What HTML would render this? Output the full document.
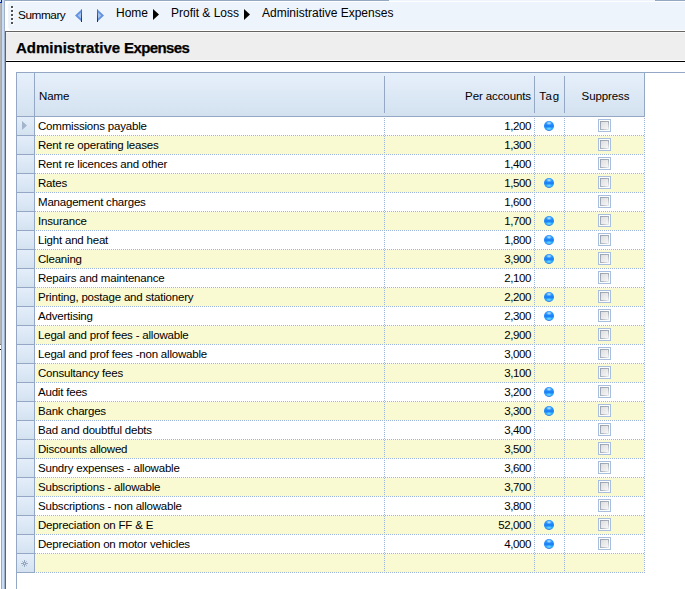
<!DOCTYPE html>
<html><head><meta charset="utf-8"><style>
html,body{margin:0;padding:0;width:685px;height:589px;overflow:hidden;background:#fff;}
body{position:relative;font-family:"Liberation Sans",sans-serif;color:#000;}
.a{position:absolute;}
.t{position:absolute;font-size:11.5px;letter-spacing:-0.1px;line-height:13px;white-space:nowrap;}
.bc{position:absolute;font-size:12px;line-height:14px;white-space:nowrap;color:#000;}
.hd{position:absolute;font-size:11.5px;letter-spacing:-0.1px;line-height:13px;white-space:nowrap;}
.rh{position:absolute;left:17px;width:17px;background:linear-gradient(#e4eefa,#d4e2f0);}
.dh{position:absolute;height:1px;background:repeating-linear-gradient(to right,#9cb4dc 0 1px,transparent 1px 2px);}
.dv{position:absolute;width:1px;background:repeating-linear-gradient(to bottom,#9cb4dc 0 1px,transparent 1px 2px);}
.tag{position:absolute;width:10px;height:10px;border-radius:50%;background:radial-gradient(ellipse 3px 2px at 50% 22%,#c8e6ff 0,rgba(150,210,255,0) 100%),radial-gradient(ellipse 3px 2px at 50% 78%,#70dcff 0,rgba(100,210,255,0) 100%),linear-gradient(#2a98ff 0,#2090ff 35%,#1a7cf4 52%,#30b0ff 78%,#1e5cd8 100%);}
.cb{position:absolute;width:11px;height:11px;border:1px solid #a8bedf;background:#fdfdfd;}
.cb i{position:absolute;left:1px;top:1px;width:9px;height:9px;background:linear-gradient(135deg,#9aa2b2 0%,#a8b0bc 55%,#f2f2f2 100%);}
.cb b{position:absolute;left:2px;top:2px;width:7px;height:7px;background:linear-gradient(135deg,#dedede,#f6f6f6);}
</style></head><body>

<div class="a" style="left:0;top:0;width:1px;height:344px;background:#b4b4b4"></div>
<div class="a" style="left:0;top:344px;width:1px;height:1px;background:#707070"></div>
<div class="a" style="left:0;top:349px;width:1px;height:1px;background:#000"></div>
<div class="a" style="left:1px;top:0;width:1px;height:589px;background:#98aac8"></div>
<div class="a" style="left:2px;top:0;width:2px;height:589px;background:#c8dcf8"></div>
<div class="a" style="left:4px;top:0;width:1px;height:589px;background:#a0b0c8"></div>
<div class="a" style="left:0;top:0;width:1px;height:2px;background:#c8dcf8"></div>
<div class="a" style="left:1px;top:0;width:1px;height:3px;background:#0a28a0"></div>
<div class="a" style="left:0;top:2px;width:2px;height:1px;background:#0a28a0"></div>
<div class="a" style="left:5px;top:0;width:384px;height:1px;background:#94a8c4"></div>
<div class="a" style="left:389px;top:0;width:266px;height:1px;background:#eef4fc"></div>
<div class="a" style="left:655px;top:0;width:30px;height:1px;background:#94a8c4"></div>
<div class="a" style="left:8px;top:2px;width:677px;height:28px;background:#eef4fc;border-radius:4px 0 0 4px"></div>
<div class="a" style="left:12px;top:7px;width:2px;height:2px;background:#fff"></div>
<div class="a" style="left:11px;top:6px;width:2px;height:2px;background:#505050"></div>
<div class="a" style="left:12px;top:11px;width:2px;height:2px;background:#fff"></div>
<div class="a" style="left:11px;top:10px;width:2px;height:2px;background:#505050"></div>
<div class="a" style="left:12px;top:15px;width:2px;height:2px;background:#fff"></div>
<div class="a" style="left:11px;top:14px;width:2px;height:2px;background:#505050"></div>
<div class="a" style="left:12px;top:19px;width:2px;height:2px;background:#fff"></div>
<div class="a" style="left:11px;top:18px;width:2px;height:2px;background:#505050"></div>
<div class="a" style="left:12px;top:23px;width:2px;height:2px;background:#fff"></div>
<div class="a" style="left:11px;top:22px;width:2px;height:2px;background:#505050"></div>
<div class="t" style="left:18px;top:9px;letter-spacing:-0.45px;font-size:11.8px">Summary</div>
<svg class="a" style="left:74px;top:8px" width="32" height="15" viewBox="0 0 32 15">
<defs><linearGradient id="dk" x1="0" y1="0" x2="0" y2="1"><stop offset="0" stop-color="#4a7ad8"/><stop offset="1" stop-color="#0a24a4"/></linearGradient></defs>
<polygon points="1,7.5 8,1 8,14" fill="#6292e0"/>
<polygon points="3.6,7.5 7,4.4 7,10.6" fill="#a4c2f0"/>
<rect x="7" y="1.5" width="1" height="12.5" fill="url(#dk)"/>
<polygon points="23,1 30,7.5 23,14" fill="#6292e0"/>
<polygon points="24,4.4 27.4,7.5 24,10.6" fill="#a4c2f0"/>
<rect x="23" y="1.5" width="1" height="12.5" fill="url(#dk)"/>
</svg>
<div class="bc" style="left:116px;top:6px">Home</div>
<svg class="a" style="left:153px;top:9px" width="7" height="12"><polygon points="0,0 6,5.5 0,11" fill="#000"/></svg>
<div class="bc" style="left:171px;top:6px">Profit &amp; Loss</div>
<svg class="a" style="left:244px;top:9px" width="7" height="12"><polygon points="0,0 6,5.5 0,11" fill="#000"/></svg>
<div class="bc" style="left:262px;top:6px">Administrative Expenses</div>
<div class="a" style="left:5px;top:31px;width:680px;height:1px;background:#646464"></div>
<div class="a" style="left:6px;top:32px;width:679px;height:1px;background:#f8f8f8"></div>
<div class="a" style="left:6px;top:33px;width:679px;height:27px;background:#eeeeee"></div>
<div class="a" style="left:6px;top:60px;width:679px;height:1px;background:#fff"></div>
<div class="a" style="left:6px;top:61px;width:679px;height:1px;background:#000"></div>
<div class="a" style="left:5px;top:31px;width:1px;height:558px;background:#646464"></div>
<div class="a" style="left:16px;top:39px;font-size:15px;line-height:18px;font-weight:bold;letter-spacing:0px;white-space:nowrap;-webkit-text-stroke:0.25px #000">Administrative</div>
<div class="a" style="left:124px;top:39px;font-size:15px;line-height:18px;font-weight:bold;letter-spacing:-0.6px;white-space:nowrap;-webkit-text-stroke:0.25px #000">Expenses</div>
<div class="a" style="left:16px;top:72px;width:669px;height:1px;background:#94a8c6"></div>
<div class="a" style="left:16px;top:72px;width:1px;height:517px;background:#94a8c6"></div>
<div class="a" style="left:17px;top:73px;width:627px;height:43px;background:linear-gradient(#e6f0fb,#d3e1ef)"></div>
<div class="a" style="left:16px;top:116px;width:629px;height:1px;background:#94a8c6"></div>
<div class="a" style="left:644px;top:72px;width:1px;height:45px;background:#94a8c6"></div>
<div class="a" style="left:34px;top:72px;width:1px;height:501px;background:#94a8c6"></div>
<div class="a" style="left:384px;top:76px;width:1px;height:37px;background:#94a8c6"></div>
<div class="a" style="left:534px;top:76px;width:1px;height:37px;background:#94a8c6"></div>
<div class="a" style="left:564px;top:76px;width:1px;height:37px;background:#94a8c6"></div>
<div class="hd" style="left:39px;top:90px">Name</div>
<div class="hd" style="left:385px;width:146px;text-align:right;top:90px">Per accounts</div>
<div class="hd" style="left:535px;width:29px;text-align:center;top:90px;letter-spacing:0.7px">Tag</div>
<div class="hd" style="left:566px;width:79px;text-align:center;top:90px">Suppress</div>
<div class="a" style="left:35px;top:117px;width:609px;height:18px;background:#ffffff"></div>
<div class="rh" style="top:117px;height:18px"></div>
<div class="a" style="left:17px;top:135px;width:17px;height:1px;background:#94a8c6"></div>
<div class="dh" style="left:35px;top:135px;width:610px"></div>
<div class="t" style="left:38px;top:120px;letter-spacing:-0.2px">Commissions payable</div>
<div class="t" style="left:385px;width:146px;text-align:right;top:120px;letter-spacing:-0.4px">1,200</div>
<div class="tag" style="left:544px;top:121px"></div>
<div class="cb" style="left:598px;top:119px"><i></i><b></b></div>
<div class="a" style="left:35px;top:136px;width:609px;height:18px;background:#fafad2"></div>
<div class="rh" style="top:136px;height:18px"></div>
<div class="a" style="left:17px;top:154px;width:17px;height:1px;background:#94a8c6"></div>
<div class="dh" style="left:36px;top:154px;width:609px"></div>
<div class="t" style="left:38px;top:139px;letter-spacing:-0.2px">Rent re operating leases</div>
<div class="t" style="left:385px;width:146px;text-align:right;top:139px;letter-spacing:-0.4px">1,300</div>
<div class="cb" style="left:598px;top:138px"><i></i><b></b></div>
<div class="a" style="left:35px;top:155px;width:609px;height:18px;background:#ffffff"></div>
<div class="rh" style="top:155px;height:18px"></div>
<div class="a" style="left:17px;top:173px;width:17px;height:1px;background:#94a8c6"></div>
<div class="dh" style="left:35px;top:173px;width:610px"></div>
<div class="t" style="left:38px;top:158px;letter-spacing:-0.2px">Rent re licences and other</div>
<div class="t" style="left:385px;width:146px;text-align:right;top:158px;letter-spacing:-0.4px">1,400</div>
<div class="cb" style="left:598px;top:157px"><i></i><b></b></div>
<div class="a" style="left:35px;top:174px;width:609px;height:18px;background:#fafad2"></div>
<div class="rh" style="top:174px;height:18px"></div>
<div class="a" style="left:17px;top:192px;width:17px;height:1px;background:#94a8c6"></div>
<div class="dh" style="left:36px;top:192px;width:609px"></div>
<div class="t" style="left:38px;top:177px;letter-spacing:-0.2px">Rates</div>
<div class="t" style="left:385px;width:146px;text-align:right;top:177px;letter-spacing:-0.4px">1,500</div>
<div class="tag" style="left:544px;top:178px"></div>
<div class="cb" style="left:598px;top:176px"><i></i><b></b></div>
<div class="a" style="left:35px;top:193px;width:609px;height:18px;background:#ffffff"></div>
<div class="rh" style="top:193px;height:18px"></div>
<div class="a" style="left:17px;top:211px;width:17px;height:1px;background:#94a8c6"></div>
<div class="dh" style="left:35px;top:211px;width:610px"></div>
<div class="t" style="left:38px;top:196px;letter-spacing:-0.2px">Management charges</div>
<div class="t" style="left:385px;width:146px;text-align:right;top:196px;letter-spacing:-0.4px">1,600</div>
<div class="cb" style="left:598px;top:195px"><i></i><b></b></div>
<div class="a" style="left:35px;top:212px;width:609px;height:18px;background:#fafad2"></div>
<div class="rh" style="top:212px;height:18px"></div>
<div class="a" style="left:17px;top:230px;width:17px;height:1px;background:#94a8c6"></div>
<div class="dh" style="left:36px;top:230px;width:609px"></div>
<div class="t" style="left:38px;top:215px;letter-spacing:-0.2px">Insurance</div>
<div class="t" style="left:385px;width:146px;text-align:right;top:215px;letter-spacing:-0.4px">1,700</div>
<div class="tag" style="left:544px;top:216px"></div>
<div class="cb" style="left:598px;top:214px"><i></i><b></b></div>
<div class="a" style="left:35px;top:231px;width:609px;height:18px;background:#ffffff"></div>
<div class="rh" style="top:231px;height:18px"></div>
<div class="a" style="left:17px;top:249px;width:17px;height:1px;background:#94a8c6"></div>
<div class="dh" style="left:35px;top:249px;width:610px"></div>
<div class="t" style="left:38px;top:234px;letter-spacing:-0.2px">Light and heat</div>
<div class="t" style="left:385px;width:146px;text-align:right;top:234px;letter-spacing:-0.4px">1,800</div>
<div class="tag" style="left:544px;top:235px"></div>
<div class="cb" style="left:598px;top:233px"><i></i><b></b></div>
<div class="a" style="left:35px;top:250px;width:609px;height:18px;background:#fafad2"></div>
<div class="rh" style="top:250px;height:18px"></div>
<div class="a" style="left:17px;top:268px;width:17px;height:1px;background:#94a8c6"></div>
<div class="dh" style="left:36px;top:268px;width:609px"></div>
<div class="t" style="left:38px;top:253px;letter-spacing:-0.2px">Cleaning</div>
<div class="t" style="left:385px;width:146px;text-align:right;top:253px;letter-spacing:-0.4px">3,900</div>
<div class="tag" style="left:544px;top:254px"></div>
<div class="cb" style="left:598px;top:252px"><i></i><b></b></div>
<div class="a" style="left:35px;top:269px;width:609px;height:18px;background:#ffffff"></div>
<div class="rh" style="top:269px;height:18px"></div>
<div class="a" style="left:17px;top:287px;width:17px;height:1px;background:#94a8c6"></div>
<div class="dh" style="left:35px;top:287px;width:610px"></div>
<div class="t" style="left:38px;top:272px;letter-spacing:-0.2px">Repairs and maintenance</div>
<div class="t" style="left:385px;width:146px;text-align:right;top:272px;letter-spacing:-0.4px">2,100</div>
<div class="cb" style="left:598px;top:271px"><i></i><b></b></div>
<div class="a" style="left:35px;top:288px;width:609px;height:18px;background:#fafad2"></div>
<div class="rh" style="top:288px;height:18px"></div>
<div class="a" style="left:17px;top:306px;width:17px;height:1px;background:#94a8c6"></div>
<div class="dh" style="left:36px;top:306px;width:609px"></div>
<div class="t" style="left:38px;top:291px;letter-spacing:-0.2px">Printing, postage and stationery</div>
<div class="t" style="left:385px;width:146px;text-align:right;top:291px;letter-spacing:-0.4px">2,200</div>
<div class="tag" style="left:544px;top:292px"></div>
<div class="cb" style="left:598px;top:290px"><i></i><b></b></div>
<div class="a" style="left:35px;top:307px;width:609px;height:18px;background:#ffffff"></div>
<div class="rh" style="top:307px;height:18px"></div>
<div class="a" style="left:17px;top:325px;width:17px;height:1px;background:#94a8c6"></div>
<div class="dh" style="left:35px;top:325px;width:610px"></div>
<div class="t" style="left:38px;top:310px;letter-spacing:-0.2px">Advertising</div>
<div class="t" style="left:385px;width:146px;text-align:right;top:310px;letter-spacing:-0.4px">2,300</div>
<div class="tag" style="left:544px;top:311px"></div>
<div class="cb" style="left:598px;top:309px"><i></i><b></b></div>
<div class="a" style="left:35px;top:326px;width:609px;height:18px;background:#fafad2"></div>
<div class="rh" style="top:326px;height:18px"></div>
<div class="a" style="left:17px;top:344px;width:17px;height:1px;background:#94a8c6"></div>
<div class="dh" style="left:36px;top:344px;width:609px"></div>
<div class="t" style="left:38px;top:329px;letter-spacing:-0.2px">Legal and prof fees - allowable</div>
<div class="t" style="left:385px;width:146px;text-align:right;top:329px;letter-spacing:-0.4px">2,900</div>
<div class="cb" style="left:598px;top:328px"><i></i><b></b></div>
<div class="a" style="left:35px;top:345px;width:609px;height:18px;background:#ffffff"></div>
<div class="rh" style="top:345px;height:18px"></div>
<div class="a" style="left:17px;top:363px;width:17px;height:1px;background:#94a8c6"></div>
<div class="dh" style="left:35px;top:363px;width:610px"></div>
<div class="t" style="left:38px;top:348px;letter-spacing:-0.2px">Legal and prof fees -non allowable</div>
<div class="t" style="left:385px;width:146px;text-align:right;top:348px;letter-spacing:-0.4px">3,000</div>
<div class="cb" style="left:598px;top:347px"><i></i><b></b></div>
<div class="a" style="left:35px;top:364px;width:609px;height:18px;background:#fafad2"></div>
<div class="rh" style="top:364px;height:18px"></div>
<div class="a" style="left:17px;top:382px;width:17px;height:1px;background:#94a8c6"></div>
<div class="dh" style="left:36px;top:382px;width:609px"></div>
<div class="t" style="left:38px;top:367px;letter-spacing:-0.2px">Consultancy fees</div>
<div class="t" style="left:385px;width:146px;text-align:right;top:367px;letter-spacing:-0.4px">3,100</div>
<div class="cb" style="left:598px;top:366px"><i></i><b></b></div>
<div class="a" style="left:35px;top:383px;width:609px;height:18px;background:#ffffff"></div>
<div class="rh" style="top:383px;height:18px"></div>
<div class="a" style="left:17px;top:401px;width:17px;height:1px;background:#94a8c6"></div>
<div class="dh" style="left:35px;top:401px;width:610px"></div>
<div class="t" style="left:38px;top:386px;letter-spacing:-0.2px">Audit fees</div>
<div class="t" style="left:385px;width:146px;text-align:right;top:386px;letter-spacing:-0.4px">3,200</div>
<div class="tag" style="left:544px;top:387px"></div>
<div class="cb" style="left:598px;top:385px"><i></i><b></b></div>
<div class="a" style="left:35px;top:402px;width:609px;height:18px;background:#fafad2"></div>
<div class="rh" style="top:402px;height:18px"></div>
<div class="a" style="left:17px;top:420px;width:17px;height:1px;background:#94a8c6"></div>
<div class="dh" style="left:36px;top:420px;width:609px"></div>
<div class="t" style="left:38px;top:405px;letter-spacing:-0.2px">Bank charges</div>
<div class="t" style="left:385px;width:146px;text-align:right;top:405px;letter-spacing:-0.4px">3,300</div>
<div class="tag" style="left:544px;top:406px"></div>
<div class="cb" style="left:598px;top:404px"><i></i><b></b></div>
<div class="a" style="left:35px;top:421px;width:609px;height:18px;background:#ffffff"></div>
<div class="rh" style="top:421px;height:18px"></div>
<div class="a" style="left:17px;top:439px;width:17px;height:1px;background:#94a8c6"></div>
<div class="dh" style="left:35px;top:439px;width:610px"></div>
<div class="t" style="left:38px;top:424px;letter-spacing:-0.2px">Bad and doubtful debts</div>
<div class="t" style="left:385px;width:146px;text-align:right;top:424px;letter-spacing:-0.4px">3,400</div>
<div class="cb" style="left:598px;top:423px"><i></i><b></b></div>
<div class="a" style="left:35px;top:440px;width:609px;height:18px;background:#fafad2"></div>
<div class="rh" style="top:440px;height:18px"></div>
<div class="a" style="left:17px;top:458px;width:17px;height:1px;background:#94a8c6"></div>
<div class="dh" style="left:36px;top:458px;width:609px"></div>
<div class="t" style="left:38px;top:443px;letter-spacing:-0.2px">Discounts allowed</div>
<div class="t" style="left:385px;width:146px;text-align:right;top:443px;letter-spacing:-0.4px">3,500</div>
<div class="cb" style="left:598px;top:442px"><i></i><b></b></div>
<div class="a" style="left:35px;top:459px;width:609px;height:18px;background:#ffffff"></div>
<div class="rh" style="top:459px;height:18px"></div>
<div class="a" style="left:17px;top:477px;width:17px;height:1px;background:#94a8c6"></div>
<div class="dh" style="left:35px;top:477px;width:610px"></div>
<div class="t" style="left:38px;top:462px;letter-spacing:-0.2px">Sundry expenses - allowable</div>
<div class="t" style="left:385px;width:146px;text-align:right;top:462px;letter-spacing:-0.4px">3,600</div>
<div class="cb" style="left:598px;top:461px"><i></i><b></b></div>
<div class="a" style="left:35px;top:478px;width:609px;height:18px;background:#fafad2"></div>
<div class="rh" style="top:478px;height:18px"></div>
<div class="a" style="left:17px;top:496px;width:17px;height:1px;background:#94a8c6"></div>
<div class="dh" style="left:36px;top:496px;width:609px"></div>
<div class="t" style="left:38px;top:481px;letter-spacing:-0.2px">Subscriptions - allowable</div>
<div class="t" style="left:385px;width:146px;text-align:right;top:481px;letter-spacing:-0.4px">3,700</div>
<div class="cb" style="left:598px;top:480px"><i></i><b></b></div>
<div class="a" style="left:35px;top:497px;width:609px;height:18px;background:#ffffff"></div>
<div class="rh" style="top:497px;height:18px"></div>
<div class="a" style="left:17px;top:515px;width:17px;height:1px;background:#94a8c6"></div>
<div class="dh" style="left:35px;top:515px;width:610px"></div>
<div class="t" style="left:38px;top:500px;letter-spacing:-0.2px">Subscriptions - non allowable</div>
<div class="t" style="left:385px;width:146px;text-align:right;top:500px;letter-spacing:-0.4px">3,800</div>
<div class="cb" style="left:598px;top:499px"><i></i><b></b></div>
<div class="a" style="left:35px;top:516px;width:609px;height:18px;background:#fafad2"></div>
<div class="rh" style="top:516px;height:18px"></div>
<div class="a" style="left:17px;top:534px;width:17px;height:1px;background:#94a8c6"></div>
<div class="dh" style="left:36px;top:534px;width:609px"></div>
<div class="t" style="left:38px;top:519px;letter-spacing:-0.2px">Depreciation on FF &amp; E</div>
<div class="t" style="left:385px;width:146px;text-align:right;top:519px;letter-spacing:-0.4px">52,000</div>
<div class="tag" style="left:544px;top:520px"></div>
<div class="cb" style="left:598px;top:518px"><i></i><b></b></div>
<div class="a" style="left:35px;top:535px;width:609px;height:18px;background:#ffffff"></div>
<div class="rh" style="top:535px;height:18px"></div>
<div class="a" style="left:17px;top:553px;width:17px;height:1px;background:#94a8c6"></div>
<div class="dh" style="left:35px;top:553px;width:610px"></div>
<div class="t" style="left:38px;top:538px;letter-spacing:-0.2px">Depreciation on motor vehicles</div>
<div class="t" style="left:385px;width:146px;text-align:right;top:538px;letter-spacing:-0.4px">4,000</div>
<div class="tag" style="left:544px;top:539px"></div>
<div class="cb" style="left:598px;top:537px"><i></i><b></b></div>
<div class="a" style="left:35px;top:554px;width:609px;height:18px;background:#fafad2"></div>
<div class="rh" style="top:554px;height:18px"></div>
<div class="a" style="left:17px;top:572px;width:17px;height:1px;background:#94a8c6"></div>
<div class="dh" style="left:36px;top:572px;width:609px"></div>
<div class="dv" style="left:384px;top:118px;height:455px"></div>
<div class="dv" style="left:534px;top:118px;height:455px"></div>
<div class="dv" style="left:564px;top:118px;height:455px"></div>
<div class="dv" style="left:644px;top:118px;height:455px"></div>
<svg class="a" style="left:22px;top:121px" width="7" height="10"><polygon points="0,0 5,4.5 0,9" fill="#a4b4cc"/></svg>
<svg class="a" style="left:20px;top:559px" width="9" height="9" viewBox="0 0 9 9" shape-rendering="crispEdges" fill="#98a8c0">
<rect x="4" y="1" width="1" height="2"/><rect x="4" y="6" width="1" height="2"/><rect x="1" y="4" width="2" height="1"/><rect x="6" y="4" width="2" height="1"/>
<rect x="3" y="3" width="3" height="1"/><rect x="3" y="5" width="3" height="1"/><rect x="3" y="4" width="1" height="1"/><rect x="5" y="4" width="1" height="1"/>
<rect x="2" y="2" width="1" height="1" opacity="0.7"/><rect x="6" y="2" width="1" height="1" opacity="0.7"/><rect x="2" y="6" width="1" height="1" opacity="0.7"/><rect x="6" y="6" width="1" height="1" opacity="0.7"/>
</svg>
</body></html>
